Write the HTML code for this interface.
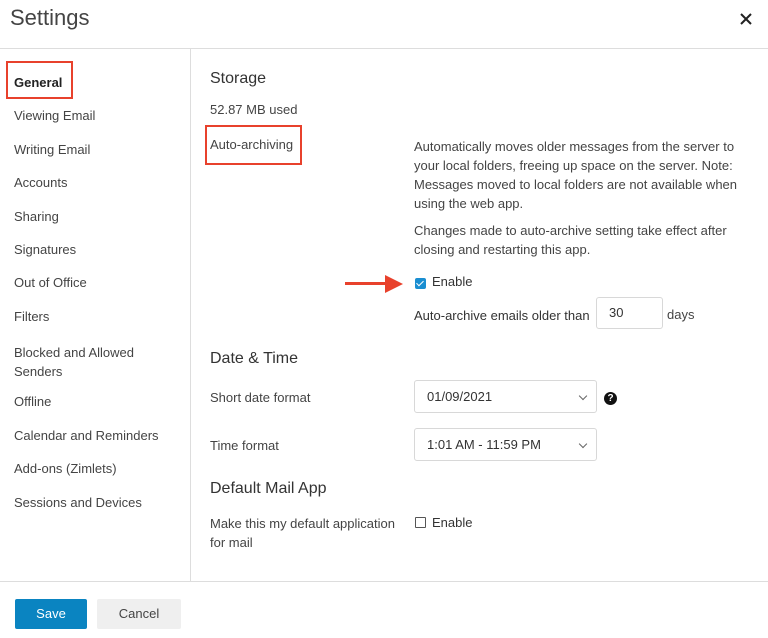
<!DOCTYPE html>
<html><head><style>
body{margin:0;width:768px;height:638px;background:#fff;font-family:"Liberation Sans",sans-serif;color:#333;position:relative;overflow:hidden}
.a{position:absolute;white-space:nowrap}
.s{font-size:13px;color:#444}
.h{font-size:16px;color:#333}
.box{position:absolute;border:2px solid #e8412c}
.sel{position:absolute;border:1px solid #d8d8d8;border-radius:3px;background:#fff;font-size:13px;color:#333;box-sizing:border-box;padding-left:12px;line-height:31px}
.chev{position:absolute;right:10px;top:12px;width:5px;height:5px;border-right:1.3px solid #666;border-bottom:1.3px solid #666;transform:rotate(45deg)}
</style></head><body>
<div class="a" style="left:10px;top:5px;font-size:22px;color:#444">Settings</div>
<svg class="a" style="left:740px;top:13px" width="12" height="12" viewBox="0 0 12 12"><path d="M1 1L11 11M11 1L1 11" stroke="#222" stroke-width="2"/></svg>
<div class="a" style="left:0;top:48px;width:768px;height:1px;background:#ddd"></div>
<div class="a" style="left:190px;top:49px;width:1px;height:532px;background:#ddd"></div>
<div class="a" style="left:0;top:581px;width:768px;height:1px;background:#ddd"></div>

<div class="box" style="left:6px;top:61px;width:63px;height:34px"></div>
<div class="a s" style="left:14px;top:75px;font-weight:bold;color:#222">General</div>
<div class="a s" style="left:14px;top:108px">Viewing Email</div>
<div class="a s" style="left:14px;top:142px">Writing Email</div>
<div class="a s" style="left:14px;top:175px">Accounts</div>
<div class="a s" style="left:14px;top:209px">Sharing</div>
<div class="a s" style="left:14px;top:242px">Signatures</div>
<div class="a s" style="left:14px;top:275px">Out of Office</div>
<div class="a s" style="left:14px;top:309px">Filters</div>
<div class="a s" style="left:14px;top:343px;line-height:19px">Blocked and Allowed<br>Senders</div>
<div class="a s" style="left:14px;top:394px">Offline</div>
<div class="a s" style="left:14px;top:428px">Calendar and Reminders</div>
<div class="a s" style="left:14px;top:461px">Add-ons (Zimlets)</div>
<div class="a s" style="left:14px;top:495px">Sessions and Devices</div>

<div class="a h" style="left:210px;top:70px">Storage</div>
<div class="a s" style="left:210px;top:102px">52.87 MB used</div>
<div class="box" style="left:205px;top:125px;width:93px;height:36px"></div>
<div class="a s" style="left:210px;top:137px">Auto-archiving</div>
<div class="a s" style="left:414px;top:137px;line-height:19px">Automatically moves older messages from the server to<br>your local folders, freeing up space on the server. Note:<br>Messages moved to local folders are not available when<br>using the web app.</div>
<div class="a s" style="left:414px;top:221px;line-height:19px">Changes made to auto-archive setting take effect after<br>closing and restarting this app.</div>
<div class="a" style="left:345px;top:282px;width:44px;height:3px;background:#e8412c"></div>
<div class="a" style="left:385px;top:275px;width:0;height:0;border-left:18px solid #e8412c;border-top:9px solid transparent;border-bottom:9px solid transparent"></div>
<div class="a" style="left:415px;top:278px;width:11px;height:11px;background:#1a8ed1;border-radius:2px"></div>
<div class="a" style="left:418px;top:279px;width:3px;height:6px;border-right:1.5px solid #fff;border-bottom:1.5px solid #fff;transform:rotate(45deg)"></div>
<div class="a s" style="left:432px;top:274px;color:#333">Enable</div>
<div class="a s" style="left:414px;top:308px;color:#333">Auto-archive emails older than</div>
<div class="sel" style="left:596px;top:297px;width:67px;height:32px;padding-left:12px;line-height:30px">30</div>
<div class="a s" style="left:667px;top:307px">days</div>

<div class="a h" style="left:210px;top:350px">Date &amp; Time</div>
<div class="a s" style="left:210px;top:390px">Short date format</div>
<div class="sel" style="left:414px;top:380px;width:183px;height:33px">01/09/2021<div class="chev"></div></div>
<div class="a" style="left:604px;top:392px;width:13px;height:13px;border-radius:50%;background:#111;color:#fff;font-size:10px;font-weight:bold;text-align:center;line-height:13px">?</div>
<div class="a s" style="left:210px;top:438px">Time format</div>
<div class="sel" style="left:414px;top:428px;width:183px;height:33px">1:01 AM - 11:59 PM<div class="chev"></div></div>

<div class="a h" style="left:210px;top:480px">Default Mail App</div>
<div class="a s" style="left:210px;top:514px;line-height:19px">Make this my default application<br>for mail</div>
<div class="a" style="left:415px;top:517px;width:9px;height:9px;border:1px solid #555;border-radius:1px"></div>
<div class="a s" style="left:432px;top:515px;color:#333">Enable</div>

<div class="a" style="left:15px;top:599px;width:72px;height:30px;background:#0a84c1;border-radius:2px;color:#fff;font-size:13px;text-align:center;line-height:30px">Save</div>
<div class="a" style="left:97px;top:599px;width:84px;height:30px;background:#efefef;border-radius:2px;color:#444;font-size:13px;text-align:center;line-height:30px">Cancel</div>
</body></html>
